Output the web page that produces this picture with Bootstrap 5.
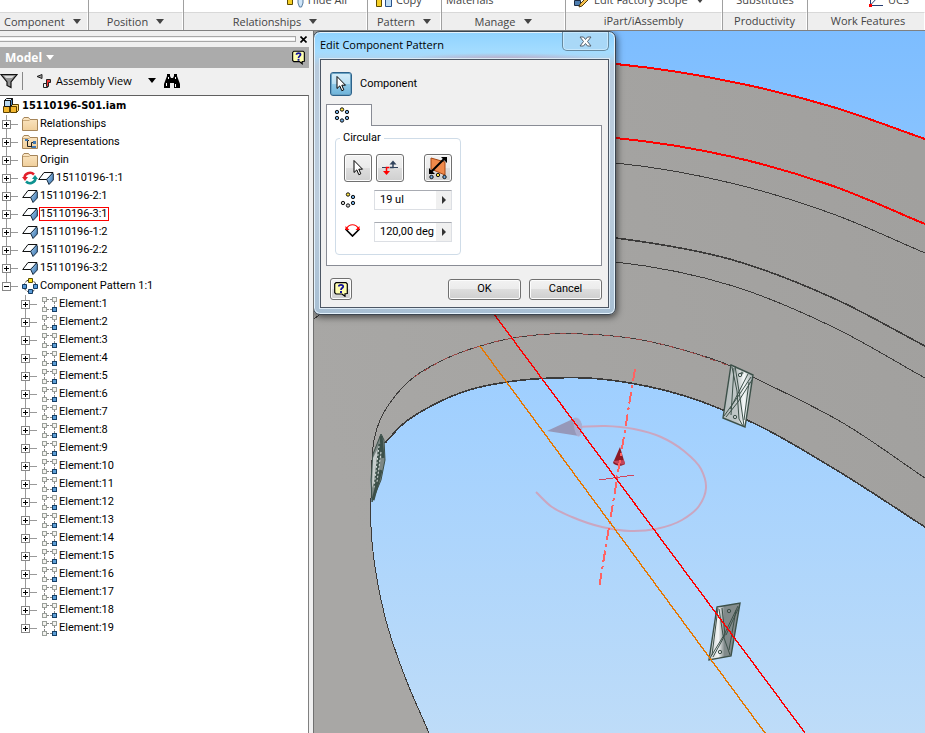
<!DOCTYPE html>
<html lang="en">
<head>
<meta charset="utf-8">
<meta name="viewport" content="width=device-width, initial-scale=1">
<title>15110196-S01.iam</title>
<link href="https://cdn.jsdelivr.net/npm/bootstrap@5.3.0/dist/css/bootstrap.min.css" rel="stylesheet">
<style>
  :root { --ui: "Open Sans", "Noto Sans", sans-serif; --small-ui: Roboto, "Liberation Sans", sans-serif; }
  body { font-family: var(--small-ui); font-size: 11px; line-height: 18px; color: #000; background: #f0f0f0; overflow: hidden; }
  button { color: inherit; }
  svg { display: block; flex: none; }
  .ribbon { display: grid; grid-template-columns: 89fr 95fr 184fr 74fr 124fr 157fr 85fr 117fr; border-bottom: 1px solid #808080; background: #fff; font-family: var(--ui); color: #444; }
  .ribbon-panel { border-right: 1px solid #a0a0a0; min-width: 0; }
  .ribbon-panel:last-child { border-right: 0; }
  .ribbon-tools { height: 12px; padding-bottom: 4px; line-height: 16px; overflow: hidden; }
  .ribbon-title { height: 18px; line-height: 16px; background: #eee; border: 0; border-top: 1px solid #d8d8d8; border-right: 1px solid #fff; white-space: nowrap; }
  .plain { background: none; border: 0; padding: 0; }
  .caret { width: 0; height: 0; border: 4px solid transparent; border-top: 5px solid currentColor; border-bottom: 0; }
  .browser { flex: 0 0 313px; min-width: 0; padding-right: 4px; }
  .grip-row { height: 16px; padding-right: 2px; }
  .grip { height: 6px; width: 296px; border: 1px solid #a8a8a8; border-left: 0; background: #fff; box-shadow: inset 0 1px #f0f0f0, inset 0 -1px #f0f0f0; }
  .browser-head { height: 21px; background: #ababab; color: #fff; font: bold 12px/21px var(--ui); padding: 0 4px 0 5px; }
  .browser-tools { height: 27px; padding-bottom: 2px; font-family: var(--ui); }
  .tool-divider { width: 1px; height: 18px; background: #888; }
  .tree { flex: 1; padding-top: 1px; background: #fff; border-top: 1px solid #606060; border-right: 1px solid #808080; }
  .tree ul { list-style: none; margin: 0; padding: 0; }
  .tree-row { height: 18px; display: flex; align-items: center; white-space: nowrap; }
  .root-row { padding-left: 2px; gap: 2px; }
  .root-name { font: bold 11px/18px "DejaVu Sans Condensed", "DejaVu Sans", sans-serif; }
  .branch > li { background: linear-gradient(#999, #999) 6px 0 / 1px 100% no-repeat; padding-left: 2px; }
  .branch > li:last-child { background-size: 1px 9px; }
  .branch .branch { padding-left: 17px; }
  .twist { width: 9px; height: 9px; flex: none; padding: 0; border: 1px solid #888; background: linear-gradient(#000,#000) 1px 3px / 5px 1px no-repeat, linear-gradient(#000,#000) 3px 1px / 1px 5px no-repeat, #fff; }
  .twist.open { background: linear-gradient(#000,#000) 1px 3px / 5px 1px no-repeat, #fff; }
  .stub { width: 7px; height: 1px; background: #999; margin-right: 4px; flex: none; }
  .node-name { margin-left: 2px; }
  .picked { outline: 1px solid #f00; line-height: 12px; }
  .scene-area { flex: 1; min-width: 0; position: relative; overflow: hidden; border-left: 1px solid #707070; background: #a5a4a2; }
  .scene { width: 100%; height: 100%; }
  .edit-window { position: absolute; left: -1px; top: 0; width: 303px; padding: 0 6px 6px; border: 1px solid #3b4550; border-radius: 7px; background: radial-gradient(ellipse 100px 6px at 190px 27px, #c58ca899, #c58ca800), linear-gradient(#8fd2ff 0, #a4dcff 20px, #b9cbdd 34px, #bccddd 60%, #a8bfd3); box-shadow: inset 0 0 0 1px #e4f2fc, 1px 2px 7px #0009; }
  .title-row { height: 27px; font: 11px/26px var(--ui); }
  .close-x { width: 47px; height: 19px; border: 1px solid #66899f; border-top: 0; border-radius: 0 0 5px 5px; background: #a9d8f7; display: flex; align-items: center; justify-content: center; box-shadow: inset 0 0 0 1px #c8e8fc; }
  .client { background: #f0f0f0; border: 1px solid #4c5664; outline: 1px solid #dceaf5; padding: 12px 6px 7px 5px; }
  .win-btn { border: 1px solid #707070; border-radius: 3px; background: linear-gradient(#f2f2f2, #ebebeb 50%, #dddddd 50%, #cfcfcf); box-shadow: inset 0 0 0 1px #fcfcfc; padding: 0; height: 22px; display: flex; align-items: center; justify-content: center; }
  .win-btn.wide { width: 73px; height: 21px; line-height: 18px; }
  .win-btn.square { width: 28px; height: 28px; }
  .win-btn.pressed { width: 22px; height: 24px; border-color: #2c628b; background: linear-gradient(#d5ecf8, #b9dff3 50%, #8fc9e8 50%, #6eb4da); box-shadow: inset 0 0 0 1px #6ba3c3; }
  .win-btn.help { width: 22px; }
  .pattern-tab { width: 46px; height: 22px; background: #fff; border: 1px solid #898c95; border-bottom: 0; padding: 0 0 2px 7px; margin-bottom: -1px; position: relative; display: flex; align-items: center; }
  .sheet { background: #fff; border: 1px solid #898c95; padding: 3px 8px 10px; min-height: 140px; }
  .circular-set { width: 126px; height: 126px; position: relative; padding: 9px 9px 0 5px; }
  .circular-set::before { content: ""; position: absolute; inset: 9px 0 0; border: 1px solid #cfdce8; border-radius: 4px; }
  .circular-set legend { float: none; width: auto; margin: 0; padding: 0 3px; font-size: 11px; line-height: 18px; background: #fff; position: absolute; left: 5px; top: 0; }
  .circular-set > div { position: relative; }
  .value-box { width: 78px; height: 20px; border: 1px solid #dcdfe4; border-top-color: #a8abb2; }
  .value-box input { width: 61px; border: 0; padding: 0 0 0 5px; font: 11px/18px var(--small-ui); min-width: 0; }
  .value-box button { flex: 1; border: 0; background: #f0f0f0; padding: 0; display: flex; align-items: center; justify-content: center; }
</style>
<script src="https://cdn.jsdelivr.net/npm/bootstrap@5.3.0/dist/js/bootstrap.bundle.min.js"></script>
</head>
<body class="d-flex flex-column vh-100">

<svg width="0" height="0" class="position-absolute" aria-hidden="true">
  <defs>
    <linearGradient id="gBlue" x1="0" y1="0" x2="1" y2="1"><stop offset="0" stop-color="#b4d8f4"/><stop offset="1" stop-color="#2f6cab"/></linearGradient>
    <linearGradient id="gFold" x1="0" y1="0" x2="0" y2="1"><stop offset="0" stop-color="#fbe6c3"/><stop offset="1" stop-color="#f0cf9b"/></linearGradient>
    <symbol id="i-folder" viewBox="0 0 16 16"><path d="M.5 14.500V3.500L2 1.500h4.500L8 3.500h7.500v11z" fill="url(#gFold)" stroke="#a5855a"/><path d="M1 4.500h6.500" stroke="#c9a878"/></symbol>
    <symbol id="i-reps" viewBox="0 0 16 16"><use href="#i-folder"/><path d="M3 6.500h4M5.500 6.500v6h4M9.500 8.500h4M9.500 8.500v5" fill="none" stroke="#222"/><path d="M3 5h3v2H3zM11 7h3v3h-3zM10 12h4v2h-4z" fill="#3f78b4"/></symbol>
    <symbol id="i-part" viewBox="0 0 16 16"><path d="M.7 9.500L6 2.500h9L10 9.500z" fill="#eef6fd" stroke="#111"/><path d="M14.500 3l.8 1v6L11 14.500 8.500 9l1.500-1z" fill="url(#gBlue)" stroke="#14283c"/><path d="M2.500 8.500L6.500 3.500h6L8.500 8.500z" fill="#fff"/></symbol>
    <symbol id="i-pattern" viewBox="0 0 16 16"><circle cx="8" cy="8" r="6" fill="none" stroke="#222" stroke-dasharray="3 1.500"/><path d="M6.500.5h4v4h-4z" fill="#ffe61e" stroke="#5f5000"/><path d="M.5 6.500h4v4h-4zM11.500 6.500h4v4h-4zM6.500 11.500h4v4h-4z" fill="#5a9bd8" stroke="#123a60"/></symbol>
    <symbol id="i-element" viewBox="0 0 16 16"><g shape-rendering="crispEdges"><path d="M6 3.500h5M3.500 6v5M6 13.500h5M13.500 6v5" stroke="#888" stroke-dasharray="2 1" fill="none"/><path d="M1.500 1.500h4v4h-4zM11.500 1.500h4v4h-4zM1.500 11.500h4v4h-4z" fill="#f4f4f0" stroke="#9a9f9a"/><path d="M11.500 11.500h4v4h-4z" fill="#5c9ed6" stroke="#143f66"/></g></symbol>
    <symbol id="i-iam" viewBox="0 0 18 18"><path d="M1.500 9.500h6v6h-6zM8.500 9.500h6v6h-6z" fill="#f3b72f" stroke="#5c4100"/><path d="M8.500 9.500l2-2h6v6l-2 2v-6z" fill="#ffd76d" stroke="#5c4100"/><path d="M2.500 3.500h6v6h-6z" fill="#b9d8f1" stroke="#111"/><path d="M2.500 3.500l2-2h6v6l-2 2v-6z" fill="#e3f1fb" stroke="#111"/><path d="M8.500 3.500l2-2v6l-2 2z" fill="#4680b8" stroke="#111"/></symbol>
    <symbol id="i-refresh" viewBox="0 0 16 16"><path d="M2.500 8A5.500 5 0 0 1 12 4.500" fill="none" stroke="#e3202b" stroke-width="2.500"/><path d="M0 7h6L3 11z" fill="#e3202b"/><path d="M13.500 8A5.500 5 0 0 1 4 11.500" fill="none" stroke="#0d9290" stroke-width="2.500"/><path d="M10 9h6l-3-4z" fill="#0d9290"/></symbol>
    <symbol id="i-help" viewBox="0 0 14 15"><path d="M2 .7h10L13.300 2v9.500L11 11.700v2.600L8 12H2L.7 10.700V2z" fill="#fffeb0" stroke="#000" stroke-width="1.200"/><path d="M4.800 4.500C4.800 2.300 9.200 2.300 9.200 4.500 9.200 6.200 7 6 7 8" fill="none" stroke="#10109a" stroke-width="1.800"/><path d="M6 9h2v2H6z" fill="#10109a"/></symbol>
    <symbol id="i-cursor" viewBox="0 0 12 18"><path d="M2 1.500v12l2.800-2.600 2 4.800 2-.9-2-4.600h3.700z" fill="#fff" stroke="#000"/></symbol>
    <symbol id="i-ring" viewBox="0 0 16 16"><g stroke="#111" fill="#6fa8dc"><circle cx="8" cy="2.500" r="1.700" fill="#ffe640"/><circle cx="3" cy="5" r="1.700"/><circle cx="13" cy="5" r="1.700"/><circle cx="3" cy="11" r="1.700"/><circle cx="13" cy="11" r="1.700"/><circle cx="8" cy="13.500" r="1.700"/></g></symbol>
    <symbol id="i-count" viewBox="0 0 16 16"><g stroke="#111" fill="#6fa8dc"><circle cx="8" cy="2.500" r="1.700" fill="#ffe640"/><circle cx="13" cy="5" r="1.700"/><circle cx="13" cy="11" r="1.700"/><circle cx="8" cy="13.500" r="1.700" fill="#ccc"/><circle cx="3" cy="11" r="1.700" fill="#ccc"/></g></symbol>
  </defs>
</svg>

<header class="ribbon">
  <section class="ribbon-panel"><div class="ribbon-tools"></div><button class="ribbon-title w-100 d-flex align-items-center gap-1 p-0 ps-1">Component<i class="caret ms-1"></i></button></section>
  <section class="ribbon-panel"><div class="ribbon-tools"></div><button class="ribbon-title w-100 d-flex align-items-center justify-content-center gap-2 p-0">Position<i class="caret"></i></button></section>
  <section class="ribbon-panel"><div class="ribbon-tools d-flex align-items-end justify-content-end pe-3"><svg width="18" height="16" viewBox="0 0 18 16"><path d="M1.500 7.500h5v5h-5z" fill="#f5cf25" stroke="#5e4b00"/><path d="M12 5h5v6l-1.500 4h-2L12 11z" fill="#cfe6fa" stroke="#567b9e"/></svg><button class="plain ms-1 me-1">Hide All</button></div><button class="ribbon-title w-100 d-flex align-items-center justify-content-center gap-2 p-0">Relationships<i class="caret"></i></button></section>
  <section class="ribbon-panel"><div class="ribbon-tools d-flex align-items-end ps-2"><svg width="16" height="14" viewBox="0 0 16 14"><path d="M.5 4.500h5v8h-5z" fill="#f5cf25" stroke="#5e4b00"/><path d="M9.500 4.500h6v8h-6z" fill="#bddcf5" stroke="#28518a"/></svg><button class="plain ms-1">Copy</button></div><button class="ribbon-title w-100 d-flex align-items-center justify-content-center gap-2 p-0">Pattern<i class="caret"></i></button></section>
  <section class="ribbon-panel"><div class="ribbon-tools d-flex align-items-end ps-1"><button class="plain">Materials</button></div><button class="ribbon-title w-100 d-flex align-items-center justify-content-center gap-2 p-0">Manage<i class="caret"></i></button></section>
  <section class="ribbon-panel"><div class="ribbon-tools d-flex align-items-end ps-2"><svg width="16" height="15" viewBox="0 0 16 15"><path d="M.5 7.500h6v5h-6z" fill="#4e7eb0" stroke="#1c2c44"/><path d="M5 14l1-3 8-8 2 2-8 8z" fill="#f6c14c" stroke="#4e3a10"/></svg><button class="plain ms-1 d-flex align-items-center gap-2 text-nowrap">Edit Factory Scope<i class="caret"></i></button></div><div class="ribbon-title text-center">iPart/iAssembly</div></section>
  <section class="ribbon-panel"><div class="ribbon-tools d-flex align-items-end justify-content-center"><button class="plain">Substitutes</button></div><div class="ribbon-title text-center">Productivity</div></section>
  <section class="ribbon-panel"><div class="ribbon-tools d-flex align-items-end justify-content-end pe-3"><svg width="17" height="16" viewBox="0 0 17 16"><path d="M3.500 0v13.500H16M3.500 13L12 4" fill="none" stroke="#263c70"/><path d="M2 12h3v3H2z" fill="#f00"/></svg><button class="plain ms-1">UCS</button></div><div class="ribbon-title ps-1 text-center">Work Features</div></section>
</header>

<main class="d-flex flex-grow-1 overflow-hidden">
  <aside class="browser d-flex flex-column">
    <div class="grip-row d-flex align-items-center justify-content-between"><div class="grip"></div><button class="plain" aria-label="Close panel"><svg width="7" height="7" viewBox="0 0 7 7"><path d="M.5.500l6 6M6.500.500l-6 6" stroke="#000" stroke-width="1.600"/></svg></button></div>
    <div class="browser-head d-flex align-items-center justify-content-between"><button class="plain fw-bold text-white d-flex align-items-center gap-1">Model<i class="caret"></i></button><button class="plain" aria-label="Help"><svg width="13" height="15"><use href="#i-help"/></svg></button></div>
    <div class="browser-tools d-flex align-items-center">
      <button class="plain" aria-label="Filter"><svg width="18" height="16" viewBox="0 0 18 16"><path d="M1 1.500h16L11 9v5.500l-4-2V9z" fill="#909090" stroke="#111" stroke-width="1.200"/><path d="M4 3h10l-2 2H6z" fill="#ddd"/></svg></button>
      <span class="tool-divider mx-1"></span>
      <button class="plain d-flex align-items-center ms-2"><svg width="17" height="16" viewBox="0 0 17 16"><path d="M2 3.500l5-2v4z" fill="#999" stroke="#222"/><path d="M8.500 10.500h4v4h-4z" fill="#eee" stroke="#222"/><path d="M11.500 6.500h4v3h-2v4h-2z" fill="#e33" stroke="#222"/></svg><span class="ms-1">Assembly View</span><i class="caret ms-3"></i></button>
      <button class="plain ms-2" aria-label="Find"><svg width="16" height="14" viewBox="0 0 16 14"><path d="M3 0h3v2l1 2h2l1-2V0h3v2l3 8v4h-6V9H6v5H0v-4l3-8z" fill="#000"/><path d="M2.500 9v3M11.500 10v3M4.500 3v2M11.500 3v2" stroke="#fff"/></svg></button>
    </div>
    <nav class="tree" aria-label="Model tree">
      <div class="tree-row root-row"><svg width="18" height="18"><use href="#i-iam"/></svg><span class="root-name">15110196-S01.iam</span></div>
      <ul class="branch" id="tree"></ul>
    </nav>
  </aside>

  <section class="scene-area" aria-label="Model view">
    <svg class="scene" viewBox="314 31 611 702" preserveAspectRatio="xMinYMin slice" fill="none">
      <defs>
        <linearGradient id="sky" gradientUnits="userSpaceOnUse" x1="0" y1="31" x2="0" y2="733"><stop offset="0" stop-color="#7dbdff"/><stop offset=".5" stop-color="#9fcfff"/><stop offset="1" stop-color="#bedcf8"/></linearGradient>
        <linearGradient id="ringTone" gradientUnits="userSpaceOnUse" x1="314" y1="400" x2="925" y2="200"><stop offset="0" stop-color="#a8a7a5"/><stop offset="1" stop-color="#a1a09e"/></linearGradient>
        <linearGradient id="metal" x1="0" y1="0" x2="1" y2="0"><stop offset="0" stop-color="#b4bcbc"/><stop offset=".5" stop-color="#c2c9c9"/><stop offset=".7" stop-color="#f6fafa"/><stop offset="1" stop-color="#9aa5a5"/></linearGradient>
        <linearGradient id="metal2" x1="0" y1="0" x2="1" y2="0"><stop offset="0" stop-color="#c5caca"/><stop offset=".3" stop-color="#f4f6f6"/><stop offset=".5" stop-color="#808a8a"/><stop offset="1" stop-color="#858b8b"/></linearGradient>
      </defs>
      <path fill="url(#ringTone)" d="M314 31H925V733H314z"/>
      <path fill="url(#sky)" data-curve="560 60 616 64 733 82 833 107 925 139" data-close="L925 31L560 31Z"/>
      <path fill="url(#sky)" data-curve="429 733 405 677 385 617 375 567 371 527 371 500 373 465 385 443 403 424 433 405 469 390 507 382 553 378 587 378 630 383 700 401 723 410 747 420 833 468 925 527" data-close="L925 733Z"/>
      <g stroke="#3c3b3a" stroke-width="1" shape-rendering="crispEdges">
        <path stroke="#f00" stroke-width="2" data-curve="560 60 616 64 733 82 833 107 925 139"/>
        <path stroke="#f00" stroke-width="2" data-curve="560 134 616 138 733 157 833 186 925 224"/>
        <path data-curve="560 159 616 163 731 183 833 214 925 253"/>
        <path stroke-width="1.600" data-curve="560 232 616 238 733 260 833 298 925 346"/>
        <path data-curve="560 258 616 262 733 286 833 327 925 378"/>
        <path data-curve="371 527 371 500 372 460 374 440 380 420 392 400 414 377 443 360 480 346 513 338 550 334 583 334 630 338 680 349 733 367 753 377 843 423 925 478"/>
        <path stroke="#9a4846" stroke-dasharray="6 5" data-curve="414 377 443 360 480 346 513 338 550 334 583 334 630 338 680 349 733 367"/>
        <path stroke-width="1.600" data-curve="385 443 403 424 433 405 469 390 507 382 553 378 587 378 630 383 700 401 723 410 747 420 833 468 925 527"/>
        <path data-curve="371 500 371 527 375 567 385 617 405 677 429 733"/>
        <path d="M314 319l8-6"/>
      </g>
      <g stroke="#3c5049" stroke-width="1">
        <path fill="#7c8784" d="M381 434l3 6 1 20-4 20-9 22-1-22 2-26z"/>
        <path fill="#c5cccb" stroke="none" d="M373 458l5-10-1 26-5 14z"/>
        <path stroke-width="3" d="M381 436l2 22M381 470l-8 30M380 444l-5 44"/>
        <path stroke="#d8dfdd" stroke-dasharray="2 2" d="M379 446l-5 42M381 452l-4 30"/>
        <path fill="url(#metal)" stroke-width="1.400" d="M731 365l22 10-8 52-22-9z"/>
        <path d="M732 367l5 24 2 28 4 7M735 366l4 25 5 35M751 377l-14 21-13 18M748 374l-18 35M734 368l-3 47M752 380l-14 22-12 15M749 382l-5 38"/>
        <circle cx="740" cy="375" r="1.700"/><circle cx="742" cy="373" r="1"/><circle cx="735" cy="417" r="1.700"/>
        <path fill="url(#metal2)" stroke-width="1.400" d="M717 607l23-4-9 53-22 4z"/>
        <path d="M719 609l4 26 7 20M738 606l-14 29-14 23M718 608l-6 47M722 608l3 27-12 22M736 610l-7 40M739 607l-13 28"/>
        <circle cx="729" cy="611" r="1.700"/><circle cx="720" cy="652" r="1.700"/>
      </g>
      <path stroke="#cba6c0" stroke-width="2" data-curve="536 492 552 507 572 517 602 527 630 531 656 529 682 520 699 506 706 488 701 469 684 451 661 437 634 429 605 426 578 427"/>
      <path fill="#9698b9" d="M547 431l28-13c8 0 9 15 4 18z"/><path fill="#aeb2d6" opacity=".8" d="M574 418c9-4 11 18 4 19-4-5-5-14-4-19z"/>
      <path fill="#8c1924" d="M620 447l-7 16c3 3 8 4 12 1z"/><path fill="#c2455a" d="M613 461l11-1 1 4c-4 1-8 1-12-3z"/>
      <g shape-rendering="crispEdges">
        <path stroke="#ff6262" stroke-width="2" stroke-dasharray="12 4 3 4" d="M635 369L599 588"/>
        <path stroke="#d1455c" d="M599 480l35-5"/>
        <path stroke="#e67700" stroke-width="1.400" d="M480 346L765 733"/>
        <path stroke="#f00" stroke-width="1.400" d="M491 310L805 733"/>
      </g>
    </svg>

    <form class="edit-window" aria-label="Edit Component Pattern" onsubmit="return false">
      <div class="title-row d-flex justify-content-between align-items-start"><span>Edit Component Pattern</span>
        <button type="button" class="close-x" aria-label="Close"><svg width="13" height="11" viewBox="0 0 13 11"><path d="M1 1h3.500l2 2.500L8.500 1H12L8.500 5.500 12 10H8.500l-2-2.500L4.500 10H1l3.500-4.500z" fill="#fff" stroke="#55606c"/></svg></button></div>
      <div class="client">
        <div class="d-flex align-items-center ps-1 pb-2"><button type="button" class="win-btn pressed" id="pick" aria-label="Select component"><svg width="12" height="18"><use href="#i-cursor"/></svg></button><label for="pick" class="ms-2">Component</label></div>
        <button type="button" class="pattern-tab" aria-label="Circular pattern"><svg width="16" height="16"><use href="#i-ring"/></svg></button>
        <div class="sheet">
          <fieldset class="circular-set">
            <legend>Circular</legend>
            <div class="d-flex pt-3 ps-1">
              <button type="button" class="win-btn square" aria-label="Select axis"><svg width="12" height="18"><use href="#i-cursor"/></svg></button>
              <button type="button" class="win-btn square ms-1 me-auto" aria-label="Flip axis"><svg width="18" height="18" viewBox="0 0 18 18"><path d="M1 8.500h5M11 8.500h6" stroke="#30435c"/><path d="M8.500 8.500H5.500v4" fill="none" stroke="#f00" stroke-width="1.500"/><path d="M2 12h7l-3.500 4z" fill="#f00"/><path d="M9 8.500h3V5" fill="none" stroke="#30435c" stroke-width="1.500"/><path d="M8.500 5.500h7l-3.500-4z" fill="#30435c"/></svg></button>
              <button type="button" class="win-btn square" aria-label="Midplane"><svg width="20" height="24" viewBox="0 0 20 24"><path d="M3 2l14 4v13L3 13z" fill="#f08a4b" stroke="#a34614"/><path d="M3 16L16 3" stroke="#000" stroke-width="2"/><path d="M13 1h6v6zM1 12v6h6z" fill="#000"/><g stroke="#111" fill="#6fa8dc"><circle cx="3.500" cy="21" r="1.700"/><circle cx="10" cy="19" r="1.700" fill="#ffe640"/><circle cx="16.500" cy="21" r="1.700"/></g></svg></button>
            </div>
            <div class="d-flex align-items-center justify-content-between pt-2"><label for="count" aria-label="Count"><svg width="16" height="16"><use href="#i-count"/></svg></label><div class="value-box d-flex"><input id="count" value="19 ul"><button type="button" aria-label="Count options"><svg width="5" height="8" viewBox="0 0 5 8"><path d="M1 0l4 4-4 4z" fill="#333"/></svg></button></div></div>
            <div class="d-flex align-items-center justify-content-between pt-2 mt-1"><label for="angle" aria-label="Angle" class="ps-1 pb-1"><svg width="17" height="13" viewBox="0 0 17 13"><path d="M1.500 5l7 7 7-7" fill="none" stroke="#000" stroke-width="1.700"/><path d="M2.500 4.500c3-5 9-5 12 0" fill="none" stroke="#f00" stroke-width="1.200"/><path d="M1.500 2v4h4zM15.500 2v4h-4z" fill="#f00"/></svg></label><div class="value-box d-flex"><input id="angle" value="120,00 deg"><button type="button" aria-label="Angle options"><svg width="5" height="8" viewBox="0 0 5 8"><path d="M1 0l4 4-4 4z" fill="#333"/></svg></button></div></div>
          </fieldset>
        </div>
        <div class="d-flex align-items-center pt-2 mt-1 gap-2"><button type="button" class="win-btn help ms-1 me-auto" aria-label="Help"><svg width="14" height="15"><use href="#i-help"/></svg></button><button class="win-btn wide">OK</button><button type="button" class="win-btn wide">Cancel</button></div>
      </div>
    </form>
  </section>
</main>

<script>
  const icon = n => `<svg width="16" height="16"><use href="#i-${n}"/></svg>`;
  const row = (icons, text, cls = '', open = false) =>
    `<div class="tree-row"><button class="twist ${open ? 'open' : ''}" aria-label="${open ? 'Collapse' : 'Expand'}"></button><span class="stub"></span>${icons.map(icon).join('')}<span class="node-name ${cls}">${text}</span></div>`;
  const nodes = [
    [['folder'], 'Relationships'], [['reps'], 'Representations'], [['folder'], 'Origin'],
    [['refresh', 'part'], '15110196-1:1'], [['part'], '15110196-2:1'], [['part'], '15110196-3:1', 'picked'],
    [['part'], '15110196-1:2'], [['part'], '15110196-2:2'], [['part'], '15110196-3:2']
  ];
  const elements = Array.from({ length: 19 }, (_, i) => `<li>${row(['element'], 'Element:' + (i + 1))}</li>`).join('');
  document.getElementById('tree').innerHTML = nodes.map(n => `<li>${row(...n)}</li>`).join('') +
    `<li>${row(['pattern'], 'Component Pattern 1:1', '', true)}<ul class="branch">${elements}</ul></li>`;

  // Smooth curve through each listed point: tangents follow the neighbours, scaled by segment length.
  document.querySelectorAll('[data-curve]').forEach(p => {
    const v = p.dataset.curve.split(' ').map(Number), q = [];
    for (let i = 0; i < v.length; i += 2) q.push([v[i], v[i + 1]]);
    const dist = (a, b) => Math.hypot(b[0] - a[0], b[1] - a[1]);
    const tangent = i => {
      const b = q[i], a = q[i - 1], c = q[i + 1];
      if (!a || !c) { const s = a || b, e = a ? b : c, l = dist(s, e); return [(e[0] - s[0]) / l, (e[1] - s[1]) / l]; }
      const l1 = dist(a, b), l2 = dist(b, c), t = [0, 1].map(k => (b[k] - a[k]) / l1 * l2 + (c[k] - b[k]) / l2 * l1);
      const l = Math.hypot(...t);
      return [t[0] / l, t[1] / l];
    };
    let d = `M${q[0]}`;
    for (let i = 0; i < q.length - 1; i++) {
      const b = q[i], c = q[i + 1], l = dist(b, c) / 3, s = tangent(i), e = tangent(i + 1);
      d += `C${b[0] + s[0] * l} ${b[1] + s[1] * l} ${c[0] - e[0] * l} ${c[1] - e[1] * l} ${c[0]} ${c[1]}`;
    }
    p.setAttribute('d', d + (p.dataset.close || ''));
  });
</script>
</body>
</html>
